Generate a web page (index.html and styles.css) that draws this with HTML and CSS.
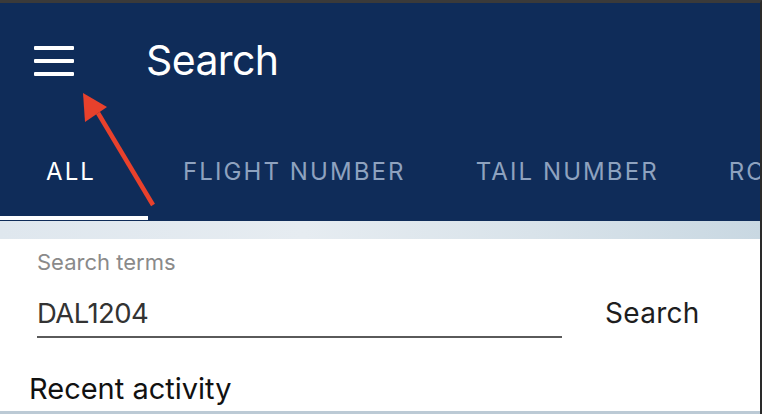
FILE: index.html
```html
<!DOCTYPE html>
<html>
<head>
<meta charset="utf-8">
<link rel="stylesheet" href="styles.css">
</head>
<body>
<div class="frame">
  <header class="header">
    <div class="toolbar">
      <button class="menu" aria-label="Menu">
        <span class="bar"></span><span class="bar"></span><span class="bar"></span>
      </button>
      <h1 class="title">Search</h1>
    </div>
    <nav class="tabs">
      <div class="tab tab-active">ALL</div>
      <div class="tab">FLIGHT NUMBER</div>
      <div class="tab">TAIL NUMBER</div>
      <div class="tab">ROUTE</div>
    </nav>
  </header>
  <div class="sky"></div>
  <main class="card">
    <div class="search-row">
      <div class="field">
        <div class="label">Search terms</div>
        <div class="input">DAL1204</div>
      </div>
      <div class="search-btn">Search</div>
    </div>
    <h2 class="recent">Recent activity</h2>
  </main>
  <div class="sky-bottom"></div>
  <svg class="arrow" width="762" height="414" viewBox="0 0 762 414">
    <line x1="153" y1="205" x2="98" y2="113" stroke="#e8412c" stroke-width="4.5" stroke-linecap="butt"/>
    <polygon points="83,93 85,122 107,107" fill="#e8412c"/>
  </svg>
</div>
</body>
</html>
```

FILE: styles.css
```css
* { box-sizing: border-box; }
html, body { margin: 0; padding: 0; }
body {
  width: 762px;
  height: 414px;
  overflow: hidden;
  background: #2c2c2c;
  font-family: "Inter", "Liberation Sans", sans-serif;
}
.frame {
  position: relative;
  width: 762px;
  height: 414px;
  border-top: 3px solid #3a3a3a;
  border-right: 2px solid #2a2a2a;
  display: flex;
  flex-direction: column;
  overflow: hidden;
}
.header {
  background: #0f2c59;
  height: 218px;
  display: flex;
  flex-direction: column;
}
.toolbar {
  height: 122px;
  display: flex;
  align-items: center;
  padding-left: 34px;
}
.menu {
  width: 40px;
  height: 30px;
  padding: 0;
  border: 0;
  background: none;
  display: flex;
  flex-direction: column;
  justify-content: space-between;
  margin-right: 72px;
  margin-top: -6px;
}
.bar {
  display: block;
  width: 40px;
  height: 4px;
  background: #fff;
  border-radius: 1px;
}
.title {
  margin: 0;
  color: #fff;
  font-weight: 400;
  font-size: 41px;
  letter-spacing: -0.6px;
  margin-top: -8px;
}
.tabs {
  flex: 1;
  display: flex;
  align-items: stretch;
  white-space: nowrap;
}
.tab {
  flex-shrink: 0;
  display: flex;
  align-items: center;
  padding: 0 35px;
  color: #8ea2bf;
  font-size: 24px;
  letter-spacing: 2.1px;
  font-weight: 400;
  padding-top: 1px;
  border-bottom: 4px solid transparent;
}
.tab-active {
  color: #fff;
  width: 148px;
  padding-left: 46px;
  padding-right: 0;
  border-bottom-color: #fff;
  margin-bottom: 1px;
}
.sky {
  height: 18px;
  background: linear-gradient(90deg, #dfe7ee 0%, #e6ecf1 40%, #d9e3ea 70%, #c9d8e2 100%);
}
.card {
  background: #fff;
  height: 172px;
  padding: 9px 0 0 0;
}
.search-row {
  display: flex;
  align-items: flex-end;
}
.field {
  margin-left: 37px;
  width: 525px;
}
.label {
  color: #8a8a8a;
  font-size: 22px;
  line-height: 28px;
}
.input {
  margin-top: 19px;
  color: #333;
  font-size: 27.5px;
  line-height: 36px;
  padding-bottom: 5px;
  border-bottom: 2px solid #5a5a5a;
  letter-spacing: -0.6px;
}
.search-btn {
  margin-left: 43px;
  color: #1e1e1e;
  font-size: 28px;
  line-height: 36px;
  margin-bottom: 7px;
  letter-spacing: 0.3px;
}
.recent {
  margin: 33px 0 0 29px;
  font-weight: 400;
  font-size: 29px;
  color: #111;
  line-height: 36px;
}
.sky-bottom {
  flex: 1;
  background: #bccad5;
}
.arrow {
  position: absolute;
  left: 0;
  top: -3px;
  pointer-events: none;
}
```
